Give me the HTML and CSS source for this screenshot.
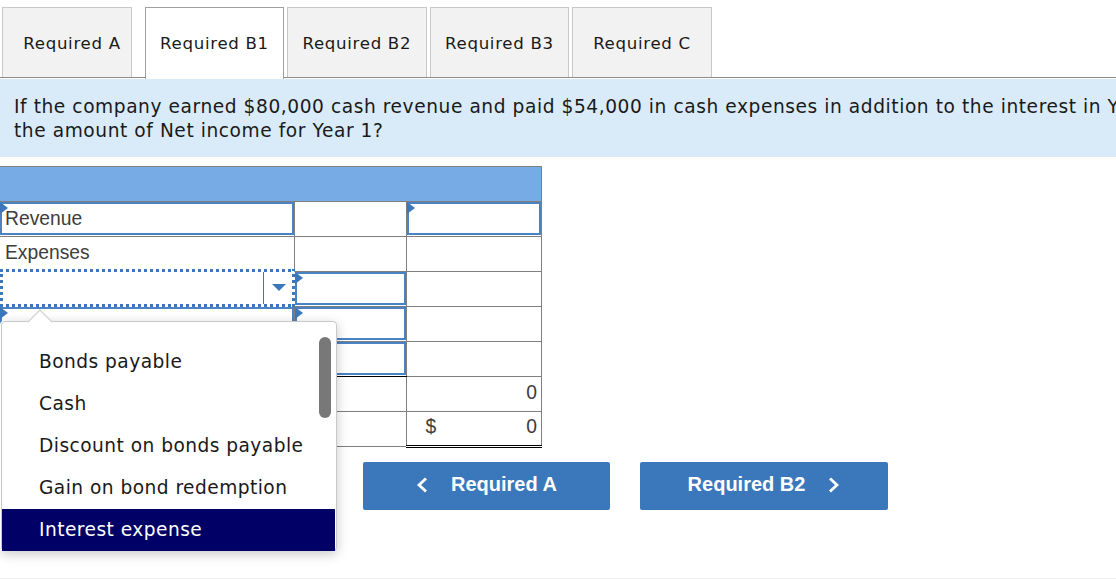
FILE: index.html
```html
<!DOCTYPE html>
<html lang="en">

<head>
  <meta charset="UTF-8">
  <title>Required B1</title>
  <link rel="stylesheet" href="styles.css">
</head>

<body>
  <div class="page">
    <ul class="tabs">
      <li class="tab tab-first">Required A</li>
      <li class="tab selected">Required B1</li>
      <li class="tab">Required B2</li>
      <li class="tab">Required B3</li>
      <li class="tab">Required C</li>
    </ul>
    <div class="question">
      <p>If the company earned $80,000 cash revenue and paid $54,000 in cash expenses in addition to the interest in Year 1, what is</p>
      <p>the amount of Net income for Year 1?</p>
    </div>
    <div class="work">
      <table class="sheet">
        <tr class="head">
          <td class="col-a"></td>
          <td class="col-b"></td>
          <td class="col-c"></td>
        </tr>
        <tr>
          <td><div class="input mark">Revenue</div></td>
          <td></td>
          <td><div class="input mark"></div></td>
        </tr>
        <tr>
          <td class="label">Expenses</td>
          <td></td>
          <td></td>
        </tr>
        <tr>
          <td>
            <div class="select">
              <span class="select-btn"><span class="caret"></span></span>
            </div>
          </td>
          <td><div class="input mark"></div></td>
          <td></td>
        </tr>
        <tr>
          <td><div class="input mark"></div></td>
          <td><div class="input mark"></div></td>
          <td></td>
        </tr>
        <tr>
          <td></td>
          <td class="total-top"><div class="input"></div></td>
          <td></td>
        </tr>
        <tr>
          <td></td>
          <td></td>
          <td class="num">0</td>
        </tr>
        <tr>
          <td></td>
          <td></td>
          <td class="num grand"><span class="dollar">$</span>0</td>
        </tr>
      </table>
      <div class="nav">
        <a href="#" class="nav-btn">
          <svg class="chev" width="12" height="16" viewBox="0 0 12 16"><path d="M10 1.5 L3 8 L10 14.5" /></svg>
          Required A
        </a>
        <a href="#" class="nav-btn">
          Required B2
          <svg class="chev" width="12" height="16" viewBox="0 0 12 16"><path d="M2 1.5 L9 8 L2 14.5" /></svg>
        </a>
      </div>
      <div class="menu">
        <span class="menu-tip"></span>
        <ul>
          <li>Bonds payable</li>
          <li>Cash</li>
          <li>Discount on bonds payable</li>
          <li>Gain on bond redemption</li>
          <li class="active">Interest expense</li>
        </ul>
        <span class="scroll"></span>
      </div>
    </div>
    <div class="foot"></div>
  </div>
</body>

</html>
```
FILE: styles.css
```css
* {
  padding: 0;
  margin: 0;
  box-sizing: border-box;
}

html, body {
  height: 580px;
  overflow: hidden;
  background: #fff;
}

.page {
  position: relative;
  width: 1116px;
  height: 580px;
  padding-top: 7px;
  overflow: hidden;
  font-family: "DejaVu Sans", Verdana, sans-serif;
  color: #1a1a1a;
}

.tabs {
  display: flex;
  list-style: none;
  height: 71px;
  margin-bottom: 1px;
  padding-left: 2px;
  border-bottom: 1px solid #8c8c8c;
}

.tab {
  width: 139.6px;
  height: 70px;
  margin-right: 3px;
  background: #f2f2f2;
  border: 1px solid #c8c8c8;
  border-bottom: 0;
  font-size: 16.6px;
  letter-spacing: 0.7px;
  line-height: 72px;
  text-align: center;
  white-space: nowrap;
}

.tab-first {
  width: 130px;
  margin-right: 13px;
  padding-left: 10px;
}

.tab.selected {
  height: 72px;
  width: 139px;
  background: #fff;
  border-color: #a0a0a0;
  position: relative;
}

.question {
  height: 78px;
  padding: 16px 0 0 14px;
  background: #d9ebf9;
  font-size: 18.6px;
  letter-spacing: 0.57px;
  line-height: 24px;
  white-space: nowrap;
  overflow: hidden;
}

.work {
  position: relative;
  margin-top: 9px;
}

.sheet {
  width: 542px;
  border-collapse: collapse;
  table-layout: fixed;
  font-family: "Liberation Sans", Arial, sans-serif;
  font-size: 19.3px;
  color: #3d3d3d;
}

.sheet td {
  height: 35px;
  border: 1px solid #7f7f7f;
  padding: 0;
  vertical-align: top;
}

.sheet tr td:first-child {
  border-left: 0;
}

.col-a {
  width: 294px;
}

.col-b {
  width: 112px;
}

.head td {
  background: #77abe6;
  border-left: 0;
  border-right: 0;
}

.head .col-c {
  border-right: 1px solid #7f7f7f;
}

.label {
  padding: 5px 0 0 5px !important;
}

.input {
  position: relative;
  height: 33px;
  margin: 0;
  border: 2px solid #4a83c4;
  padding: 4px 0 0 3px;
  background: #fff;
}

.mark::before {
  content: "";
  position: absolute;
  left: -2px;
  top: -2px;
  border-left: 8px solid #3b77bb;
  border-top: 6px solid transparent;
  border-bottom: 6px solid transparent;
}

/* square dots, the dotted border style draws them round */
.select {
  position: relative;
  z-index: 1;
  height: 38px;
  margin: -3px -1px -1px 0;
  background:
    repeating-linear-gradient(90deg, #3b77bb 0 3px, transparent 3px 6px) top / 100% 3px no-repeat,
    repeating-linear-gradient(90deg, #3b77bb 0 3px, transparent 3px 6px) bottom / 100% 3px no-repeat,
    repeating-linear-gradient(0deg, #3b77bb 0 3px, transparent 3px 6px) left / 3px 100% no-repeat,
    repeating-linear-gradient(0deg, #3b77bb 0 3px, transparent 3px 6px) right / 3px 100% no-repeat,
    #fff;
}

.select-btn {
  position: absolute;
  right: 3px;
  top: 3px;
  bottom: 3px;
  width: 29px;
  border-left: 1px solid #3b77bb;
}

.caret {
  position: absolute;
  left: 8px;
  top: 12px;
  border-top: 7px solid #3b77bb;
  border-left: 7px solid transparent;
  border-right: 7px solid transparent;
}

.num {
  position: relative;
  text-align: right;
  padding: 5px 4px 0 0 !important;
}

.grand {
  border-top: 1px solid #000 !important;
  border-bottom: 3px double #000 !important;
  padding-top: 4px !important;
}

.total-top {
  border-bottom: 1px solid #000 !important;
}

.dollar {
  position: absolute;
  left: 19px;
  top: 4px;
}

.nav {
  position: absolute;
  left: 363px;
  top: 296px;
  display: flex;
  gap: 30px;
}

.nav-btn {
  display: flex;
  align-items: center;
  justify-content: center;
  gap: 23px;
  width: 247px;
  height: 48px;
  padding-bottom: 3px;
  background: #3b77bb;
  border-radius: 2px;
  color: #fff;
  font-family: "Liberation Sans", Arial, sans-serif;
  font-size: 20px;
  font-weight: bold;
  text-decoration: none;
}

.nav-btn + .nav-btn {
  width: 248px;
}

.chev path {
  fill: none;
  stroke: #fff;
  stroke-width: 2.8;
}

.menu {
  position: absolute;
  z-index: 2;
  left: 1px;
  top: 155px;
  width: 336px;
  height: 230px;
  padding: 19px 1px 0 0;
  background: #fff;
  border: 1px solid #c9c9c9;
  border-radius: 4px;
  box-shadow: -1px 0 0 #fff, 0 3px 12px rgba(0, 0, 0, 0.22);
  font-family: "DejaVu Sans", Verdana, sans-serif;
  font-size: 18.6px;
  letter-spacing: 0.46px;
  color: #1a1a1a;
}

.menu ul {
  list-style: none;
}

.menu li {
  height: 42px;
  padding-left: 37px;
  line-height: 42px;
  white-space: nowrap;
}

.menu li.active {
  background: #000066;
  color: #fff;
}

.menu-tip {
  position: absolute;
  left: 29px;
  top: -9px;
  width: 18px;
  height: 18px;
  background: #fff;
  border-top: 1px solid #c9c9c9;
  border-left: 1px solid #c9c9c9;
  transform: rotate(45deg);
}

.scroll {
  position: absolute;
  right: 5px;
  top: 15px;
  width: 12px;
  height: 81px;
  background: #787878;
  border-radius: 6px;
}

.foot {
  position: absolute;
  left: 0;
  top: 578px;
  width: 1116px;
  height: 1px;
  background: #f0f0f0;
}
```
